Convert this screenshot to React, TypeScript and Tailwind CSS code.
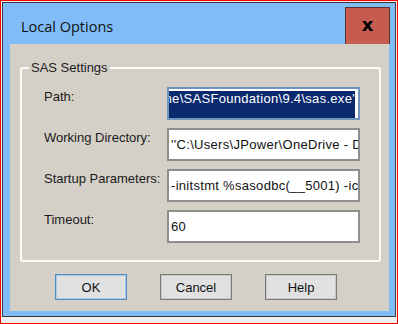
export default function App() {
  const rows = [
    { label: "Path:", value: "'C:\\Program Files\\SASHome\\SASFoundation\\9.4\\sas.exe'", selected: true },
    { label: "Working Directory:", value: "''C:\\Users\\JPower\\OneDrive -  Documents'" },
    { label: "Startup Parameters:", value: "-initstmt %sasodbc(__5001) -icon -nosplash" },
    { label: "Timeout:", value: "60" },
  ];
  return (
    <div className="w-[398px] h-[324px] border border-[#ff0000] bg-[#f0f0f0] pt-px pl-px font-['Liberation_Sans',Arial,sans-serif] text-black">
      <div className="w-[394px] h-[315px] border border-[#3a3a3a] bg-[#80bdf7] flex flex-col">
        <div className="h-[41px] flex items-end justify-between shrink-0">
          <span className="self-start pt-[14px] pl-[18px] text-[14.5px] leading-[20px] font-['Open_Sans',sans-serif] text-[#111]">
            Local Options
          </span>
          <div className="w-[45px] h-[37px] mr-[5px] bg-[#c65c50] border border-[#5e3431] border-b-0 flex items-center justify-center">
            <span className="text-[18px] leading-[18px] font-bold font-['DejaVu_Sans',sans-serif] pb-[2px]">x</span>
          </div>
        </div>
        <div className="ml-[7px] w-[379px] h-[267px] bg-[#d4d0c8] flex flex-col shrink-0">
          <fieldset className="mt-[16px] ml-[10px] w-[361px] h-[202px] border-2 border-[#fbfbfa] rounded-[3px] px-0 pt-[12px] pb-0 m-0">
            <legend className="ml-[7px] px-[2px] text-[13px] leading-[15px] text-[#222]">SAS Settings</legend>
            <div className="flex flex-col gap-[8px] pl-[22px]">
              {rows.map((r) => (
                <div key={r.label} className="flex items-start">
                  <div className="w-[123px] pt-[2px] text-[13px] leading-[15px] text-[#1a1a1a]">{r.label}</div>
                  <div
                    className={
                      "w-[193px] h-[33px] bg-white border-2 overflow-hidden pt-[2px] " +
                      (r.selected ? "border-[#7095bd] flex justify-end pr-[3px]" : "border-[#8e8e8e] pl-[2px]")
                    }
                  >
                    <span
                      className={
                        "whitespace-nowrap text-[13px] leading-[15px] tracking-[0.3px] shrink-0 " +
                        (r.selected ? "bg-[#0b2a6e] text-white" : "text-[#111]")
                      }
                    >
                      {r.value}
                    </span>
                  </div>
                </div>
              ))}
            </div>
          </fieldset>
          <div className="flex gap-[33px] ml-[45px] mt-[12px]">
            {["OK", "Cancel", "Help"].map((b) => (
              <div
                key={b}
                className={
                  "w-[72px] h-[26px] bg-[#e1e1e1] flex items-center justify-center text-[13px] leading-[15px] text-[#111] border " +
                  (b === "OK" ? "border-[#4f8cc4] shadow-[inset_0_0_0_1px_#a9c9e6]" : "border-[#7a7a7a] shadow-[inset_0_0_0_1px_#c8c8c8]")
                }
              >
                {b}
              </div>
            ))}
          </div>
        </div>
      </div>
    </div>
  );
}
